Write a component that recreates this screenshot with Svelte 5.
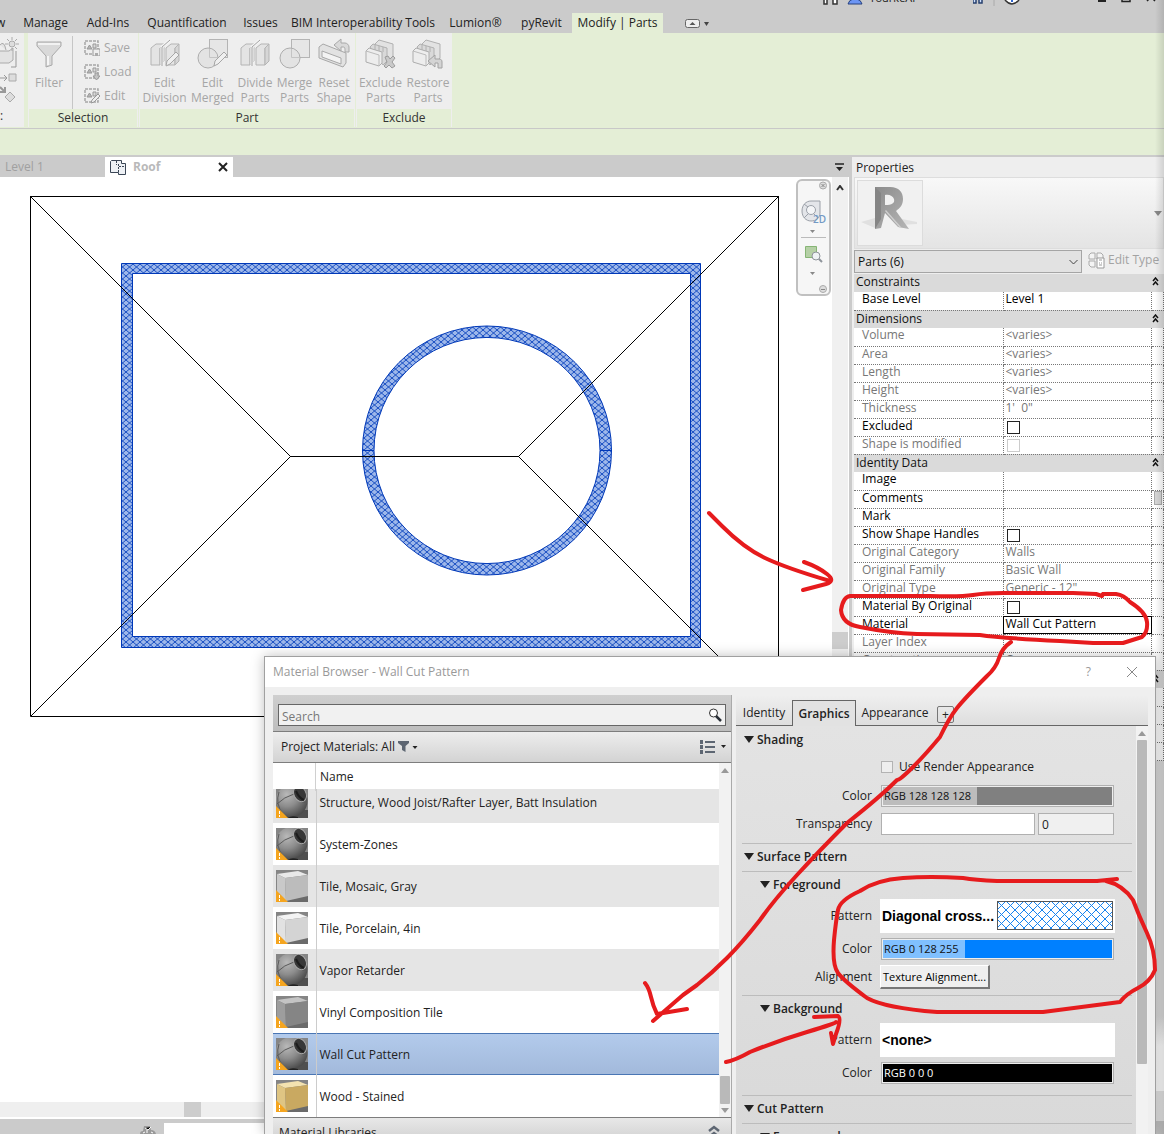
<script lang="ts">
	type Row = { name: string; value?: string; check?: boolean; muted?: boolean; active?: boolean };

	const menu = ["w", "Manage", "Add-Ins", "Quantification", "Issues", "BIM Interoperability Tools", "Lumion®", "pyRevit", "Modify | Parts"];

	const groups: { title: string; rows: Row[] }[] = [
		{ title: "Constraints", rows: [{ name: "Base Level", value: "Level 1" }] },
		{
			title: "Dimensions",
			rows: [
				{ name: "Volume", value: "<varies>", muted: true },
				{ name: "Area", value: "<varies>", muted: true },
				{ name: "Length", value: "<varies>", muted: true },
				{ name: "Height", value: "<varies>", muted: true },
				{ name: "Thickness", value: "1'  0\"", muted: true },
				{ name: "Excluded", check: true },
				{ name: "Shape is modified", check: true, muted: true }
			]
		},
		{
			title: "Identity Data",
			rows: [
				{ name: "Image" },
				{ name: "Comments" },
				{ name: "Mark" },
				{ name: "Show Shape Handles", check: true },
				{ name: "Original Category", value: "Walls", muted: true },
				{ name: "Original Family", value: "Basic Wall", muted: true },
				{ name: "Original Type", value: "Generic - 12\"", muted: true },
				{ name: "Material By Original", check: true },
				{ name: "Material", value: "Wall Cut Pattern", active: true },
				{ name: "Layer Index", muted: true },
				{ name: "Construction", value: "Core", muted: true }
			]
		},
		{ title: "Phasing", rows: [{ name: "Phase Created" }, { name: "Phase Demolished" }, { name: "IFC Parameters" }, { name: "Export to IFC" }] }
	];

	const materials = [
		{ name: "Structure, Wood Joist/Rafter Layer, Batt Insulation", kind: "ball" },
		{ name: "System-Zones", kind: "ball" },
		{ name: "Tile, Mosaic, Gray", kind: "mosaic" },
		{ name: "Tile, Porcelain, 4in", kind: "porcelain" },
		{ name: "Vapor Retarder", kind: "ball" },
		{ name: "Vinyl Composition Tile", kind: "vinyl" },
		{ name: "Wall Cut Pattern", kind: "ball" },
		{ name: "Wood - Stained", kind: "wood" }
	];

	// top, left, right faces of the cube previews
	const faces: Record<string, string[]> = {
		mosaic: ["#e9e9e9", "#c9c9c9", "#bcbcbc"],
		porcelain: ["#f3f3f3", "#e2e2e2", "#d4d4d4"],
		vinyl: ["#c4c4c4", "#9d9d9d", "#858585"],
		wood: ["#f3e2b0", "#dfc583", "#c9a961"]
	};

	let selected = $state("Wall Cut Pattern");
	let query = $state("");
</script>

{#snippet box(x: number, y: number)}
	<path d="M{x} {y + 6}l5-4h8l-4 4v17H{x}z" fill="#e4e4e4" stroke="#b4b4b4" />
	<path d="M{x + 9} {y + 6}l4-4v17l-4 4z" fill="#d6d6d6" stroke="#b4b4b4" />
{/snippet}

{#snippet pencil()}
	<path d="M17 28l1-5 9-9 3 3-9 9z" fill="#efefef" stroke="#a6a6a6" />
{/snippet}

{#snippet boxes()}
	<path d="M10 6l4-4 14 4v14l-4 4z" fill="#e2e2e2" stroke="#b0b0b0" />
	<path d="M5 9l3-3 14 4v13l-4 4z" fill="#d9d9d9" stroke="#b0b0b0" />
	<path d="M10 7v5M14 8v5M18 9v5" stroke="#b0b0b0" />
	<path d="M1 13l3-3 13 4v11l-3 3-13-4z" fill="#ededed" stroke="#adadad" />
	<path d="M1 13l13 4v11" fill="none" stroke="#bbb" />
{/snippet}

{#snippet ribbonIcon(kind: string)}
	<svg class="big" viewBox="0 0 32 32" aria-hidden="true">
		{#if kind === "division" || kind === "divide"}
			{@render box(2, 4)}
			{@render box(17, 4)}
			<path d="M13 28V9l8-7" fill="none" stroke="#f4f4f4" stroke-width="3" />
			<path d="M13 28V9l8-7" fill="none" stroke="#a2a2a2" />
			{#if kind === "division"}{@render pencil()}{/if}
		{:else if kind === "merged" || kind === "merge"}
			<rect x="12.500" y="1.500" width="18" height="18" fill="#e6e6e6" stroke="#b4b4b4" />
			<circle cx="11" cy="20" r="10" fill="#e3e3e3" stroke="#adadad" />
			<path d="M12.500 11v8.500h8" fill="none" stroke="#c4c4c4" />
			{#if kind === "merged"}{@render pencil()}{/if}
		{:else if kind === "reset"}
			<path d="M1 9l4-3 23 9v10l-3 4-24-9z" fill="#e2e2e2" stroke="#a8a8a8" />
			<path d="M4 13l19 7v6L4 19z" fill="#f3f3f3" stroke="#a8a8a8" />
			<path d="M31 14V9c0-2-2-4-4-4h-4V1l-7 6 7 6V9h2c2 0 2 1 2 5z" fill="#d9d9d9" stroke="#a8a8a8" />
		{:else if kind === "exclude"}
			{@render boxes()}
			<path d="M20 19l3-1 2 3 3-3 2 2-3 4 3 4-3 2-3-3-3 3-2-2 3-4z" fill="#c9c9c9" stroke="#9c9c9c" />
		{:else if kind === "restore"}
			{@render boxes()}
			<path d="M30 30v-6c0-2-1-3-3-3h-4v-4l-7 6 7 6v-4h3v5z" fill="#d4d4d4" stroke="#a2a2a2" />
		{:else}
			<path d="M4 4h24v4L19 18v9l-6 2V18L4 8z" fill="#d9d9d9" stroke="#a9a9a9" />
			<path d="M5 5h22v2H5z" fill="#f2f2f2" />
			<path d="M15 18v9" stroke="#f5f5f5" stroke-width="2" />
		{/if}
	</svg>
{/snippet}

{#snippet smallIcon(kind: string)}
	<svg class="small" viewBox="0 0 16 16" aria-hidden="true">
		<path d="M1 1h13v13H1z" fill="none" stroke="#a6a6a6" stroke-width="1.500" stroke-dasharray="3 1" />
		<path d="M3 9l2.500-4L8 9z" fill="#b6b6b6" stroke="#999" />
		<path d="M9 4h3v4H9z" fill="#d8d8d8" stroke="#999" />
		{#if kind === "Save"}
			<path d="M9 9h7v7H9z" fill="#eee" stroke="#999" /><path d="M11 13h3v3h-3z" fill="#aaa" />
		{:else if kind === "Load"}
			<path d="M11 9h3v3h2l-3.500 4L9 12h2z" fill="#c4c4c4" stroke="#999" />
		{:else}
			<path d="M7 15l1-3 6-6 2 2-6 6z" fill="#eee" stroke="#999" />
		{/if}
	</svg>
{/snippet}

{#snippet ribbonButton(kind: string, first: string, second: string)}
	<button class="tool">
		{@render ribbonIcon(kind)}
		<span>{first}<br />{second}</span>
	</button>
{/snippet}

{#snippet thumb(kind: string)}
	<svg class="thumb" viewBox="0 0 32 32" aria-hidden="true">
		<rect width="32" height="32" fill="#858585" />
		{#if kind === "ball"}
			<path d="M12 24h20v8H8z" fill="#4f4f4f" />
			<circle cx="15.500" cy="15" r="16" fill="url(#ball)" />
			<path d="M1 18Q8 11 18 8M7 28Q-1 18 3 6M18 8Q22 18 31 16" fill="none" stroke="#5a5a5a" />
			<ellipse cx="24" cy="8" rx="6" ry="8" transform="rotate(-28 24 8)" fill="#383838" stroke="#a8a8a8" />
			<path d="M20 5q3 7 8 9" fill="none" stroke="#1d1d1d" stroke-width="2" />
			<path d="M12 32q3-3 10-1v1z" fill="#222" />
		{:else}
			<path d="M8 28l24-5v9H8z" fill="#6b6b6b" />
			<path d="M1 4l21-3 10 4-23 3z" fill={faces[kind][0]} />
			<path d="M1 4l8 4 1 23-9-6z" fill={faces[kind][1]} />
			<path d="M9 8l23-3v21l-22 5z" fill={faces[kind][2]} />
		{/if}
		<path d="M0 20l12 12H0z" fill="#f5a51f" />
		<path d="M3.500 25v3M3.500 29v2" stroke="#fff" />
	</svg>
{/snippet}

{#snippet section(title: string, sub: boolean)}
	<h3 class:sub>
		<svg width="10" height="8" viewBox="0 0 10 8" aria-hidden="true"><path d="M0 0h10L5 7z" fill="#222" /></svg>
		{title}
	</h3>
{/snippet}

<div class="app">
	<header>
		<div class="titlebar">
			<svg width="42" height="8" viewBox="0 0 42 8" aria-hidden="true">
				<path d="M1 -1h3v5H1zM10 -1h4v5h-4z" fill="#fff" stroke="#333" stroke-width="1.500" />
				<path d="M25 4q1-4 5-5h4q4 1 5 5z" fill="#6c95f4" stroke="#26417f" />
			</svg>
			<span class="user">rourkeAI</span>
			<svg class="help" width="50" height="8" viewBox="0 0 50 8" aria-hidden="true">
				<path d="M0 0v3h3V0M6 0v3h3V0" fill="#cfe0ff" stroke="#27406f" stroke-width="1.500" />
				<path d="M21 0v6" stroke="#aaa" />
				<path d="M32 0q7 8 14 0" fill="#fff" stroke="#333" stroke-width="1.500" /><path d="M39 0v2" stroke="#36c" stroke-width="2" />
			</svg>
			<svg width="58" height="8" viewBox="0 0 58 8" aria-hidden="true">
				<path d="M0 0h8v2H0z" fill="#222" /><path d="M24 0v1.500h8V0M49 1l3-3M57 1l-3-3" fill="none" stroke="#222" stroke-width="1.500" />
			</svg>
		</div>
		<nav class="menu">
			{#each menu as item, i}
				<button class:current={i === menu.length - 1}>{item}</button>
			{/each}
			<button class="toggle" aria-label="Minimize ribbon">
				<svg width="25" height="10" viewBox="0 0 25 10">
					<rect x="0.500" y="1.500" width="14" height="8" rx="2" fill="#eee" stroke="#666" />
					<path d="M4.500 7l3-3 3 3z" fill="#555" /><path d="M19 4h5l-2.500 4z" fill="#444" />
				</svg>
			</button>
		</nav>
		<div class="ribbon">
			<div class="panel clipped">
				<svg width="24" height="74" viewBox="0 0 24 74" aria-hidden="true">
					<path d="M0 12q4-5 6 5M0 18h9l4-3v12l-4 3H0" fill="#e3e3e3" stroke="#aaa" />
					<circle cx="12" cy="11" r="3" fill="#ddd" stroke="#aaa" /><path d="M12 4v3M12 15v3M5 11h3M16 11h3M7 6l2 2M15 14l2 2M17 6l-2 2" stroke="#aaa" />
					<path d="M16 18v16h-5M0 45h6M4 42l3 3-3 3" fill="none" stroke="#999" />
					<path d="M9 41h7v7H9zM10 59l-5 5 5 5 5-5z" fill="#ddd" stroke="#aaa" />
					<path d="M0 54l4 4M5 54v5H0" fill="none" stroke="#999" stroke-width="2" />
				</svg>
				<h2>:</h2>
			</div>
			<div class="panel selection">
				<div class="tools">
					<button class="tool">{@render ribbonIcon("filter")}<span>Filter</span></button>
					<div class="stack">
						{#each ["Save", "Load", "Edit"] as label}
							<button>{@render smallIcon(label)}{label}</button>
						{/each}
					</div>
				</div>
				<h2>Selection</h2>
			</div>
			<div class="panel part">
				<div class="tools">
					{@render ribbonButton("division", "Edit", "Division")}
					{@render ribbonButton("merged", "Edit", "Merged")}
					{@render ribbonButton("divide", "Divide", "Parts")}
					{@render ribbonButton("merge", "Merge", "Parts")}
					{@render ribbonButton("reset", "Reset", "Shape")}
				</div>
				<h2>Part</h2>
			</div>
			<div class="panel exclude">
				<div class="tools">
					{@render ribbonButton("exclude", "Exclude", "Parts")}
					{@render ribbonButton("restore", "Restore", "Parts")}
				</div>
				<h2>Exclude</h2>
			</div>
		</div>
		<div class="options"></div>
	</header>

	<main>
		<section class="view">
			<div class="tabs">
				<button class="tab">Level 1</button>
				<button class="tab open">
					<svg width="17" height="15" viewBox="0 0 17 15" aria-hidden="true">
						<path d="M1.500 .5h10v3h4v11h-7v-2h-8v-11z" fill="#eef1f5" stroke="#3b4656" />
						<path d="M6.500 1v4M8.500 4v9M9 6.500h6" stroke="#3b4656" stroke-dasharray="2 1" />
					</svg>
					<b>Roof</b>
					<svg class="x" width="10" height="10" viewBox="0 0 10 10" aria-hidden="true"><path d="M1 1l8 8M9 1L1 9" stroke="#222" stroke-width="2" /></svg>
				</button>
				<svg class="more" width="9" height="8" viewBox="0 0 9 8" aria-hidden="true"><path d="M0 1h9" stroke="#222" stroke-width="1.500" /><path d="M1 4h7L4.500 8z" fill="#222" /></svg>
			</div>
			<div class="stage">
				<div class="canvas">
					<svg class="drawing" role="img" aria-label="Roof plan">
						<defs>
							<pattern id="wall" width="7" height="6" patternUnits="userSpaceOnUse">
								<rect width="7" height="6" fill="#9db7ea" />
								<path d="M0 0l7 6M7 0L0 6" stroke="#0a43bd" stroke-width="0.900" />
							</pattern>
							<radialGradient id="ball" cx="35%" cy="30%" r="75%">
								<stop offset="0" stop-color="#b9b9b9" /><stop offset=".5" stop-color="#8c8c8c" /><stop offset="1" stop-color="#484848" />
							</radialGradient>
						</defs>
						<g transform="translate(0 -177)" fill="none" stroke="#0038b8">
							<path d="M121.500 263.500h579v384h-579zM132.500 273.500v363h558v-363z" fill="url(#wall)" fill-rule="evenodd" />
							<path d="M362.500 450.500a124.500 124.500 0 1 0 249 0a124.500 124.500 0 1 0-249 0M374 450.500a113 113 0 1 0 226 0a113 113 0 1 0-226 0" fill="url(#wall)" fill-rule="evenodd" />
							<path d="M362 450.500h12M600 450.500h12" />
							<g stroke="#000">
								<path d="M30.500 196.500h748v520h-748zM290 456.500h228" />
								<path d="M30.500 196.500l260 260-260 260M778.500 196.500l-260 260 260 260" shape-rendering="crispEdges" />
							</g>
						</g>
					</svg>
					<div class="navbar">
						<svg viewBox="1 1 31 113" aria-hidden="true">
							<circle cx="26" cy="5.500" r="3.500" fill="#ddd" stroke="#aaa" /><path d="M24.500 4l3 3M27.500 4l-3 3" stroke="#888" />
							<path d="M5 31c0-6 4-10 9-10h9v12c0 5-4 8-9 8s-9-4-9-10z" fill="#e3e5e9" stroke="#9ba0a8" />
							<circle cx="14" cy="30" r="4.500" fill="#f4f5f7" stroke="#9ba0a8" /><path d="M7 38l4-4M17 34l4 4M7 24l4 3" stroke="#9ba0a8" />
							<path d="M13 50h5l-2.500 3z" fill="#888" /><path d="M4 57.500h25" stroke="#bbb" />
							<path d="M8.500 66.500h11v11h-11z" fill="#b5d0a6" stroke="#86b575" />
							<circle cx="19" cy="76" r="4" fill="#eef2f5" stroke="#8e949b" /><path d="M22 79l3 3" stroke="#8e949b" stroke-width="2" />
							<path d="M13 92h5l-2.500 3z" fill="#888" />
							<circle cx="26" cy="109" r="3.500" fill="#ddd" stroke="#aaa" /><path d="M24 109.500h4" stroke="#888" />
						</svg>
						<span>2D</span>
					</div>
				</div>
				<div class="vscroll">
					<svg width="8" height="6" viewBox="0 0 8 6" aria-hidden="true"><path d="M1 5l3-4 3 4" fill="none" stroke="#333" stroke-width="2" /></svg>
					<i></i>
				</div>
			</div>
			<div class="hscroll"><i></i></div>
			<div class="status">
				<svg width="16" height="9" viewBox="0 0 16 9" aria-hidden="true"><path d="M0 9q0-3 3-3l1-5h6l1 4q4 0 5 4z" fill="#999" /><path d="M5 3l3 2 3-3M7 5v3M3 8l2-1M11 7l2 1" stroke="#fff" /></svg>
				<div></div>
			</div>
		</section>

		<aside class="properties">
			<h2>Properties</h2>
			<div class="preview">
				<div class="picture">
					<svg viewBox="0 0 58 58" aria-hidden="true">
						<defs>
							<linearGradient id="leg" x1="0" x2="1" y1="0" y2="1"><stop offset="0" stop-color="#8b8b8b" /><stop offset="1" stop-color="#b5b5b5" /></linearGradient>
						</defs>
						<path d="M0 38l14-4v10zM36 34l20 4v2l-16 1z" fill="#e0e0e0" />
						<path fill-rule="evenodd" d="M14 3h15c9 0 13 5 13 12 0 6-3 9-7 12l13 18-11-2-13-14-4 15-6 1zM24 11v10c7 0 10-2 9-6-1-3-5-5-9-4z" fill="url(#leg)" />
						<path d="M14 3l6 6v26l-6 10z" fill="#858585" />
						<path d="M24 27l1-1 15 17-1 1z" fill="#d0d0d0" />
					</svg>
				</div>
				<svg width="8" height="5" viewBox="0 0 8 5" aria-hidden="true"><path d="M0 0h8L4 5z" fill="#888" /></svg>
			</div>
			<div class="type">
				<div class="combo">
					<select aria-label="Selection"><option>Parts (6)</option></select>
					<svg width="9" height="6" viewBox="0 0 9 6" aria-hidden="true"><path d="M.5 1l4 4 4-4" fill="none" stroke="#444" /></svg>
				</div>
				<button class="edit-type">
					<svg width="17" height="17" viewBox="0 0 17 17" aria-hidden="true">
						<path d="M1 3l2-2h4v6H1zM9 1h4l2 2v4H9zM1 9h6v6H3l-2-2z" fill="#f4f4f4" stroke="#aaa" />
						<path d="M9 6h7v10H9z" fill="#fff" stroke="#999" /><path d="M11 8h3M11 11h1M13 11h1M11 13h3" stroke="#999" />
					</svg>
					Edit Type
				</button>
			</div>
			<table>
				<colgroup><col class="c-name" /><col /><col class="c-btn" /></colgroup>
				{#each groups as group}
					<tbody>
						<tr class="group">
							<th colspan="2">{group.title}</th>
							<td><svg width="7" height="9" viewBox="0 0 7 9" aria-hidden="true"><path d="M1 4l2.500-3L6 4M1 8l2.500-3L6 8" fill="none" stroke="#111" stroke-width="1.500" /></svg></td>
						</tr>
						{#each group.rows as row}
							<tr class:muted={row.muted}>
								<th scope="row">{row.name}</th>
								<td class:active={row.active}>
									{#if row.check}
										<input type="checkbox" aria-label={row.name} disabled={row.muted} />
									{:else}{row.value ?? ""}{/if}
								</td>
								<td>{#if row.name === "Comments"}<i class="grip"></i>{/if}</td>
							</tr>
						{/each}
					</tbody>
				{/each}
			</table>
			<div class="rest"></div>
		</aside>
	</main>

	<div class="dialog" role="dialog" aria-label="Material Browser">
		<div class="caption">
			<span>Material Browser - Wall Cut Pattern</span>
			<button aria-label="Help">?</button>
			<button aria-label="Close"><svg width="12" height="12" viewBox="0 0 12 12"><path d="M1 1l10 10M11 1L1 11" stroke="#888" /></svg></button>
		</div>
		<div class="body">
			<section class="browser">
				<div class="search">
					<input type="text" placeholder="Search" aria-label="Search materials" bind:value={query} />
					<svg width="14" height="14" viewBox="0 0 14 14" aria-hidden="true"><circle cx="5.500" cy="5" r="4" fill="#fff" stroke="#333" /><path d="M8 8l5 5" stroke="#2b3038" stroke-width="2.500" /></svg>
				</div>
				<div class="filter">
					<button>
						Project Materials: All
						<svg width="20" height="12" viewBox="0 0 20 12" aria-hidden="true"><path d="M0 0h11v2L7.500 5v6L4 9V5L0 2z" fill="#5d6672" /><path d="M14.500 5h5L17 8z" fill="#222" /></svg>
					</button>
					<button aria-label="List view">
						<svg width="27" height="14" viewBox="0 0 27 14"><path d="M0 2h3M0 7h3M0 12h3" stroke="#5d6672" stroke-width="4" /><path d="M5 2h10M5 7h10M5 12h10" stroke="#5d6672" stroke-width="2" /><path d="M21 5h5l-2.500 3z" fill="#222" /></svg>
					</button>
				</div>
				<div class="list">
					<div class="rows">
						<div class="head"><span></span><span>Name</span></div>
						<div class="scroller">
							<table>
								<tbody>
									{#each materials as material}
										<tr class:selected={selected === material.name} onclick={() => (selected = material.name)}>
											<td>{@render thumb(material.kind)}</td>
											<td>{material.name}</td>
										</tr>
									{/each}
								</tbody>
							</table>
						</div>
					</div>
					<div class="bar low">
						<svg width="8" height="5" viewBox="0 0 8 5" aria-hidden="true"><path d="M0 5l4-5 4 5z" fill="#999" /></svg>
						<i></i>
						<svg width="8" height="5" viewBox="0 0 8 5" aria-hidden="true"><path d="M0 0h8L4 5z" fill="#999" /></svg>
					</div>
				</div>
				<div class="libraries">
					Material Libraries
					<svg width="12" height="12" viewBox="0 0 12 12" aria-hidden="true"><path d="M1 6l5-4 5 4M1 12l5-4 5 4" fill="none" stroke="#5d6672" stroke-width="2.500" /></svg>
				</div>
			</section>

			<section class="editor">
				<div class="pages">
					<button>Identity</button>
					<button class="current">Graphics</button>
					<button>Appearance</button>
					<button class="add">+</button>
				</div>
				<div class="form">
					<div class="sections">
						{@render section("Shading", false)}
						<div class="fields shading">
							<label class="wide"><input type="checkbox" />Use Render Appearance</label>
							<label for="shade">Color</label>
							<button id="shade" class="swatch grey"><span>RGB 128 128 128</span></button>
							<label for="transparency">Transparency</label>
							<div class="pair"><input id="transparency" type="text" /><input type="text" value="0" aria-label="Transparency value" /></div>
						</div>
						{@render section("Surface Pattern", false)}
						{@render section("Foreground", true)}
						<div class="fields">
							<label for="fg">Pattern</label>
							<button id="fg" class="pattern">
								Diagonal cross...
								<svg width="117" height="30" aria-hidden="true">
									<defs>
										<pattern id="cross" width="9" height="9" patternUnits="userSpaceOnUse"><path d="M0 0l9 9M9 0L0 9" stroke="#1684f0" /></pattern>
									</defs>
									<rect x="0.500" y="0.500" width="115" height="28" fill="#fff" stroke="#555" />
									<rect x="1" y="1" width="114" height="27" fill="url(#cross)" />
								</svg>
							</button>
							<label for="fgc">Color</label>
							<button id="fgc" class="swatch blue"><span>RGB 0 128 255</span></button>
							<label for="align">Alignment</label>
							<button id="align" class="align">Texture Alignment...</button>
						</div>
						{@render section("Background", true)}
						<div class="fields last">
							<label for="bg">Pattern</label>
							<button id="bg" class="pattern">&lt;none&gt;</button>
							<label for="bgc">Color</label>
							<button id="bgc" class="swatch black"><span>RGB 0 0 0</span></button>
						</div>
						{@render section("Cut Pattern", false)}
						{@render section("Foreground", true)}
					</div>
					<div class="bar">
						<svg width="8" height="5" viewBox="0 0 8 5" aria-hidden="true"><path d="M0 5l4-5 4 5z" fill="#999" /></svg>
						<i></i>
					</div>
				</div>
			</section>
		</div>
	</div>

	<!-- hand drawn markup -->
	<svg class="ink" aria-hidden="true">
		<path d="M709 513l13 13Q744 548 765 558T830 581M804 562Q818 567 827 574T826 584L803 590" />
		<path d="M1103 594l-1 2-6-2-23-1H1003Q985 593 973 595T930 596H850Q843 597 841 610Q842 624 860 627Q890 633 917 634L980 635Q1000 638 1060 641L1093 643H1123L1142 637Q1148 632 1147 622T1130 602Q1124 595 1116 594H1103" />
		<path d="M1011 642Q1002 648 999 658T987 676Q965 698 957 708T940 737Q926 754 913 767T897 780Q880 797 847 823Q820 850 797 875T760 920Q742 943 727 958T697 985L683 995L653 1021M645 983Q649 988 651 997T657 1014L687 1009" />
		<path d="M726 1062Q736 1060 750 1052Q777 1041 807 1032T836 1022M814 1017L838 1016Q842 1018 836 1034L833 1044L831 1033" />
		<path d="M1117 879L1097 881H997Q975 880 963 878Q930 876 903 878T860 891Q840 900 838 910T834 940Q832 965 838 973T867 998Q885 1008 937 1012H1043L1120 1002Q1126 994 1138 988T1155 970Q1155 950 1147 933T1133 900Q1123 885 1106 881" />
	</svg>
</div>

<style>
	:global(body) {
		margin: 0;
	}

	.app {
		position: relative;
		display: flex;
		flex-direction: column;
		height: 100vh;
		overflow: hidden;
		background: #cbcbcb;
		color: #222;
		font: 12px/16px "Segoe UI", "Open Sans", "Noto Sans", sans-serif;
	}

	.app::after {
		content: "";
		position: absolute;
		inset: 0 0 0 auto;
		width: 9px;
		background: linear-gradient(90deg, transparent, rgba(0, 0, 0, 0.12));
		pointer-events: none;
	}

	button,
	input,
	select {
		font: inherit;
		color: inherit;
		margin: 0;
		padding: 0;
		border: 0;
		border-radius: 0;
		background: none;
		box-sizing: border-box;
	}

	h2,
	h3 {
		margin: 0;
		font: inherit;
	}

	svg {
		display: block;
		flex: none;
	}

	table {
		width: 100%;
		border-collapse: collapse;
		table-layout: fixed;
	}

	.titlebar {
		display: flex;
		justify-content: flex-end;
		height: 13px;
		padding-right: 8px;
		overflow: hidden;
	}

	.user {
		width: 38px;
		margin: -10px 64px 0 6px;
		font-size: 11px;
	}

	.help {
		margin-right: 75px;
	}

	.menu {
		display: grid;
		grid-template-columns: 14px 63px 62px 96px 51px 154px 71px 61px 91px 68px;
		height: 20px;
		white-space: nowrap;
	}

	.menu button {
		display: flex;
		justify-content: center;
		align-items: center;
	}

	.menu button:first-child {
		justify-content: flex-start;
		margin-left: -4px;
	}

	.menu .current {
		background: #e4eed6;
	}

	.ribbon {
		display: flex;
		height: 95px;
		border-bottom: 1px solid #c8c8c8;
		background: #e4eed6;
	}

	.panel {
		display: flex;
		flex-direction: column;
		height: 94px;
		margin-right: 1px;
		background: #eee;
		box-sizing: border-box;
		color: #a6a6a6;
	}

	.panel h2 {
		height: 18px;
		margin: 0 1px;
		background: #e4eed6;
		color: #333;
		text-align: center;
		line-height: 18px;
	}

	.clipped {
		width: 24px;
		margin-right: 4px;
	}

	.clipped h2 {
		margin: 0;
		background: none;
		text-align: left;
	}

	.selection {
		width: 110px;
	}

	.part {
		width: 216px;
	}

	.exclude {
		width: 96px;
	}

	.tools {
		display: grid;
		flex: 1;
		padding-top: 5px;
	}

	.selection .tools {
		grid-template-columns: 45px 1fr;
		padding-top: 3px;
	}

	.part .tools {
		grid-template-columns: 51px 45px 40px 39px 40px;
	}

	.exclude .tools {
		grid-template-columns: 49px 46px;
	}

	.tool {
		display: flex;
		flex-direction: column;
		align-items: center;
		gap: 5px;
		line-height: 15px;
		white-space: nowrap;
	}

	.selection .tool {
		border-right: 1px solid #c6c6c6;
		padding: 2px 2px 0 0;
	}

	.big {
		width: 32px;
		height: 32px;
	}

	.small {
		width: 16px;
		height: 16px;
	}

	.stack {
		display: flex;
		flex-direction: column;
		padding-left: 11px;
	}

	.stack button {
		display: flex;
		align-items: center;
		gap: 4px;
		height: 24px;
	}

	.options {
		height: 26px;
		background: #e4eed6;
	}

	main {
		display: flex;
		flex: 1;
		min-height: 0;
	}

	.view {
		display: flex;
		flex: 1;
		flex-direction: column;
		min-width: 0;
		margin-right: 3px;
	}

	.tabs {
		display: flex;
		height: 22px;
		align-items: flex-end;
	}

	.tab {
		width: 105px;
		height: 20px;
		padding-left: 5px;
		text-align: left;
		color: #a0a0a0;
	}

	.tab.open {
		display: flex;
		align-items: center;
		gap: 6px;
		width: 128px;
		background: #fff;
		color: #b9b9b9;
	}

	.x {
		margin: 0 5px 0 auto;
	}

	.more {
		margin: 0 5px 6px auto;
	}

	.stage {
		display: flex;
		flex: 1;
		min-height: 0;
		background: #fff;
	}

	.canvas {
		position: relative;
		flex: 1;
	}

	.drawing {
		width: 100%;
		height: 100%;
	}

	.navbar {
		position: absolute;
		top: 2px;
		right: 1px;
		border: 2px solid #c0c0c0;
		border-radius: 6px;
		background: #f6f6f6;
	}

	.navbar svg {
		width: 31px;
		height: 113px;
	}

	.navbar span {
		position: absolute;
		right: 3px;
		top: 32px;
		font-size: 10px;
		line-height: 12px;
		font-weight: 600;
		color: #7399c4;
	}

	.vscroll {
		display: flex;
		flex-direction: column;
		align-items: center;
		justify-content: space-between;
		width: 16px;
		height: 464px;
		margin-right: 1px;
		padding: 8px 0 453px;
		background: #f0f0f0;
	}

	.vscroll i {
		width: 16px;
		height: 17px;
		background: #cdcdcd;
	}

	.hscroll {
		height: 15px;
		padding-left: 184px;
		border-bottom: 2px solid #fff;
		background: #efefef;
	}

	.hscroll i {
		display: block;
		width: 17px;
		height: 15px;
		background: #cdcdcd;
	}

	.status {
		display: flex;
		align-items: flex-end;
		gap: 8px;
		height: 15px;
		padding-left: 140px;
		background: #cbcbcb;
	}

	.status div {
		flex: 1;
		height: 11px;
		background: #fff;
	}

	.properties {
		display: flex;
		flex-direction: column;
		width: 310px;
		margin-top: 2px;
		padding-left: 2px;
		background: #eee;
	}

	.properties h2 {
		height: 20px;
		padding: 3px 2px 0;
		box-sizing: border-box;
	}

	.preview {
		display: flex;
		align-items: center;
		justify-content: space-between;
		height: 72px;
		padding: 0 1px 0 2px;
		box-sizing: border-box;
		border: 1px solid #ddd;
		background: linear-gradient(#f8f8f8, #e4e4e4);
	}

	.picture {
		padding: 3px;
		border: 1px solid #dcdcdc;
		background: #f1f1f1;
	}

	.picture svg {
		width: 58px;
		height: 58px;
	}

	.type {
		display: flex;
		gap: 6px;
		padding: 1px 0;
	}

	.combo {
		position: relative;
		width: 228px;
	}

	select {
		width: 100%;
		height: 23px;
		padding-left: 3px;
		border: 1px solid #a5a5a5;
		background: #e2e2e2;
		appearance: none;
		color: #111;
	}

	.combo svg {
		position: absolute;
		right: 4px;
		top: 9px;
	}

	.edit-type {
		display: flex;
		align-items: center;
		gap: 3px;
		height: 20px;
		color: #a3a3a3;
		white-space: nowrap;
	}

	.c-name {
		width: 149px;
	}

	.c-btn {
		width: 12px;
	}

	.properties tr {
		height: 18px;
		background: #fff;
		color: #000;
	}

	.properties th,
	.properties td {
		height: 17px;
		padding: 0;
		border-right: 1px dotted #777;
		border-bottom: 1px dotted #777;
		font-weight: 400;
		line-height: 14px;
		text-align: left;
		vertical-align: top;
		white-space: pre;
	}

	.properties th {
		padding-left: 8px;
	}

	.properties td {
		padding-left: 2px;
	}

	.properties .group th,
	.properties .group td {
		border-right: 0;
		border-bottom: 0;
		background: #dadada;
		color: #111;
		line-height: 16px;
	}

	.properties .group th {
		padding-left: 2px;
	}

	.properties .group td {
		padding: 3px 0 0;
		height: 14px;
	}

	.properties .muted {
		color: #777;
	}

	.properties td.active {
		outline: 1px solid #000;
		outline-offset: -1px;
	}

	input[type="checkbox"] {
		display: block;
		width: 13px;
		height: 13px;
		border: 1px solid #222;
		background: #fff;
		appearance: none;
	}

	.properties input {
		margin: 2px 0 0 1px;
	}

	.properties input:disabled {
		border-color: #ccc;
	}

	.grip {
		display: block;
		width: 8px;
		height: 14px;
		border: 1px solid #aaa;
		background: #d5d5d5;
		box-sizing: border-box;
	}

	.rest {
		flex: 1;
		background: linear-gradient(#dcdcdc 255px, #fff 285px, #fff 330px, #e6e6e6 330px, #e6e6e6 360px, #c4c4c4 360px);
	}

	.dialog {
		position: absolute;
		inset: 656px 8px 0 264px;
		display: flex;
		flex-direction: column;
		border: 1px solid #a0a0a0;
		border-bottom: 0;
		background: #efefef;
		box-shadow: 0 0 12px rgba(0, 0, 0, 0.25);
	}

	.caption {
		display: flex;
		align-items: center;
		gap: 35px;
		height: 30px;
		padding: 0 17px 0 8px;
		background: #fff;
		color: #999;
	}

	.caption span {
		flex: 1;
	}

	.body {
		display: grid;
		grid-template-columns: minmax(0, 459fr) minmax(0, 412fr);
		gap: 4px;
		flex: 1;
		min-height: 0;
		padding: 8px 7px 0 8px;
	}

	.browser {
		display: flex;
		flex-direction: column;
		border-right: 1px solid #aaa;
		min-height: 0;
	}

	.search {
		position: relative;
		flex: none;
		height: 37px;
		padding: 9px 5px 0;
		box-sizing: border-box;
		border-bottom: 1px solid #7d7d7d;
		background: linear-gradient(#cfcfcf, #bdbdbd);
	}

	.search input {
		width: 100%;
		height: 22px;
		padding: 2px 24px 0 3px;
		border: 1px solid #666;
		background: #f1f1f1;
	}

	.search input::placeholder {
		color: #777;
	}

	.search svg {
		position: absolute;
		right: 9px;
		top: 13px;
	}

	.filter {
		display: flex;
		flex: none;
		justify-content: space-between;
		height: 30px;
		padding: 0 4px 0 8px;
		border-bottom: 1px solid #7d7d7d;
		background: linear-gradient(#ededed, #d3d3d3);
	}

	.filter button {
		display: flex;
		align-items: center;
		gap: 3px;
	}

	.list {
		display: flex;
		flex: none;
		height: 354px;
		background: #fff;
	}

	.rows {
		flex: 1;
	}

	.head {
		display: grid;
		grid-template-columns: 42px 1fr;
		height: 26px;
		line-height: 28px;
	}

	.head span:last-child {
		border-left: 1px solid #d0d0d0;
		padding-left: 4px;
	}

	.scroller {
		height: 328px;
		overflow: hidden;
	}

	.scroller table {
		margin-top: -8px;
	}

	.scroller tr {
		height: 42px;
	}

	.scroller tr:nth-child(odd) {
		background: #e5e5e5;
	}

	.scroller td {
		height: 42px;
		padding: 2px 3px 0;
		box-sizing: border-box;
	}

	.scroller td:first-child {
		width: 43px;
		padding-top: 0;
		border-right: 1px solid #ccc;
	}

	.scroller tr.selected {
		background: linear-gradient(#b3cbec, #a2b9db);
		box-shadow: inset 0 1px #4a76b4, inset 0 -1px #4a76b4;
	}

	.thumb {
		width: 32px;
		height: 32px;
	}

	.bar {
		display: flex;
		flex-direction: column;
		align-items: center;
		gap: 4px;
		width: 12px;
		padding: 5px 0 4px;
		box-sizing: border-box;
		background: #f2f2f2;
	}

	.bar i {
		width: 10px;
		height: 324px;
		border-radius: 1px;
		background: #b9b9b9;
	}

	.bar.low i {
		height: 28px;
		margin-top: auto;
	}

	.libraries {
		display: flex;
		justify-content: space-between;
		flex: 1;
		min-height: 0;
		padding: 7px 11px 0 6px;
		border-top: 1px solid #7d7d7d;
		background: linear-gradient(#e8e8e8, #d8d8d8);
	}

	.editor {
		display: flex;
		flex-direction: column;
		min-height: 0;
	}

	.pages {
		display: flex;
		flex: none;
		align-items: flex-end;
		height: 30px;
		border-bottom: 1px solid #666;
		background: linear-gradient(#efefef, #dedede);
	}

	.pages button {
		height: 24px;
		width: 56px;
	}

	.pages button:nth-child(3) {
		width: 78px;
	}

	.pages .current {
		width: 64px;
		height: 26px;
		margin-bottom: -1px;
		border: 1px solid #666;
		border-bottom: 0;
		background: #e2e2e2;
		font-weight: 600;
	}

	.pages .add {
		width: 17px;
		height: 17px;
		margin: 0 0 2px 3px;
		border: 1px solid #777;
		border-radius: 2px;
		line-height: 14px;
	}

	.form {
		display: flex;
		flex: 1;
		min-height: 0;
		background: linear-gradient(#e3e3e3, #d9d9d9);
	}

	.sections {
		flex: 1;
		padding: 0 4px 0 6px;
		overflow: hidden;
	}

	h3 {
		display: flex;
		align-items: center;
		gap: 3px;
		height: 26px;
		padding: 0 0 1px 2px;
		border-top: 1px solid #bcbcbc;
		font-weight: 600;
	}

	h3:first-child {
		padding: 1px 0 0 2px;
		border-top: 0;
	}

	h3.sub {
		padding-left: 18px;
	}

	.fields {
		display: grid;
		grid-template-columns: 130px minmax(0, 235px);
		column-gap: 8px;
		row-gap: 5px;
		align-items: center;
		padding-bottom: 6px;
	}

	.fields.shading {
		padding: 2px 0 8px;
		row-gap: 6px;
	}

	.fields.last {
		padding-bottom: 11px;
	}

	.fields label {
		text-align: right;
	}

	.fields .wide {
		grid-column: 2;
		display: flex;
		align-items: center;
		gap: 6px;
		height: 24px;
		padding-left: 1px;
	}

	.wide input {
		width: 12px;
		height: 12px;
		border-color: #b3b3b3;
		background: #eee;
	}

	.swatch {
		height: 22px;
		margin: 0 1px;
		padding: 1px;
		border: 1px solid #b0b0b0;
		background: #eee;
		text-align: left;
		color: #111;
		font-size: 11px;
		line-height: 18px;
	}

	.swatch span {
		display: block;
		height: 18px;
		padding-left: 1px;
	}

	.grey span {
		background: linear-gradient(90deg, #bcbcbc 94px, #808080 94px);
	}

	.blue span {
		background: linear-gradient(90deg, #80c0ff 82px, #0080ff 82px);
	}

	.black span {
		background: #000;
		color: #fff;
	}

	.pair {
		display: grid;
		grid-template-columns: 154fr 76fr;
		gap: 3px;
		padding: 0 1px;
	}

	.pair input {
		width: 100%;
		height: 22px;
		padding-left: 3px;
		border: 1px solid #b0b0b0;
		background: #fff;
	}

	.pair input:last-child {
		background: #f0f0f0;
	}

	.pattern {
		display: flex;
		align-items: center;
		justify-content: space-between;
		height: 34px;
		padding: 0 1px 0 2px;
		background: #fff;
		color: #000;
		font: bold 14px/16px "Liberation Sans", sans-serif;
		white-space: nowrap;
	}

	.align {
		width: 110px;
		height: 24px;
		border: 1px solid #fff;
		border-right: 2px solid #777;
		border-bottom: 2px solid #777;
		background: #efefef;
		color: #000;
		font-size: 11px;
		white-space: nowrap;
	}

	.ink {
		position: absolute;
		inset: 0;
		width: 100%;
		height: 100%;
		fill: none;
		stroke: #e61b1d;
		stroke-width: 4px;
		stroke-linecap: round;
		stroke-linejoin: round;
		pointer-events: none;
	}
</style>
